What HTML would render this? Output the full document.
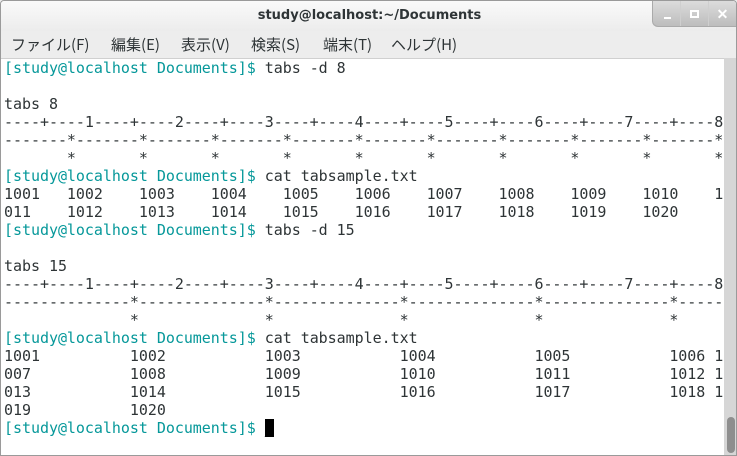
<!DOCTYPE html>
<html><head><meta charset="utf-8"><style>
*{margin:0;padding:0;box-sizing:border-box}
body{width:737px;height:456px;overflow:hidden;background:#ededed;font-family:"Liberation Sans","Noto Sans CJK JP",sans-serif;position:relative}
.win{position:absolute;left:0;top:0;width:737px;height:456px;border:1px solid #9a9a9a;border-radius:4px 4px 0 0;overflow:hidden;background:#ededed}
.title{position:absolute;left:0;top:0;width:737px;height:30px;background:linear-gradient(#fafafa,#ececec);text-align:center;font-weight:bold;font-size:13px;line-height:30px;color:#2e3436;font-family:"DejaVu Sans","Liberation Sans",sans-serif}
.btns{position:absolute;right:0;top:0;width:84px;height:26px;background:linear-gradient(#dcdcdc,#bdbdbd);border-left:1px solid #aaa;border-bottom:1px solid #aaa;border-radius:0 0 0 6px;display:flex}
.btns div{flex:1;border-left:1px solid #cfcfcf;position:relative}
.btns div:first-child{border-left:none}
.menu span{position:absolute;top:33px;font-size:15px;line-height:22px;color:#2e3436;white-space:pre;font-family:"WenQuanYi Zen Hei","Noto Sans CJK JP",sans-serif}
.term{position:absolute;left:0;top:57px;width:723px;height:397px;background:#fff;border-top:1px solid #d0d0d0}
pre{position:absolute;left:3px;top:0;font-family:"DejaVu Sans Mono","Liberation Mono",monospace;font-size:15px;letter-spacing:-0.04px;line-height:18px;color:#2e3436}
.p{color:#06989a}
.cur{background:#000;color:#000}
.sb{position:absolute;left:723px;top:57px;width:14px;height:397px;background:#d6d6d6}
.th{position:absolute;left:726px;top:416px;width:8px;height:36px;background:#8e8e8e;border-radius:4px}
</style></head><body><div class="win">
<div class="title">study@localhost:~/Documents</div>
<div class="btns"><div><span style="position:absolute;left:11px;top:16px;width:7px;height:2px;background:#fff"></span></div><div><span style="position:absolute;left:9px;top:9px;width:9px;height:8px;border:2px solid #fff"></span></div><div style="color:#fff;font-weight:bold;font-size:14px;text-align:center;line-height:26px">✕</div></div>
<div class="menu"><span style="left:10px">ファイル(F)</span><span style="left:110px">編集(E)</span><span style="left:180px">表示(V)</span><span style="left:250px">検索(S)</span><span style="left:322px">端末(T)</span><span style="left:390px">ヘルプ(H)</span></div>
<div class="term"><pre><span class="p">[study@localhost Documents]$</span> tabs -d 8

tabs 8
----+----1----+----2----+----3----+----4----+----5----+----6----+----7----+----8
-------*-------*-------*-------*-------*-------*-------*-------*-------*-------*
       *       *       *       *       *       *       *       *       *       *
<span class="p">[study@localhost Documents]$</span> cat tabsample.txt
1001   1002    1003    1004    1005    1006    1007    1008    1009    1010    1
011    1012    1013    1014    1015    1016    1017    1018    1019    1020
<span class="p">[study@localhost Documents]$</span> tabs -d 15

tabs 15
----+----1----+----2----+----3----+----4----+----5----+----6----+----7----+----8
--------------*--------------*--------------*--------------*--------------*-----
              *              *              *              *              *
<span class="p">[study@localhost Documents]$</span> cat tabsample.txt
1001          1002           1003           1004           1005           1006 1
007           1008           1009           1010           1011           1012 1
013           1014           1015           1016           1017           1018 1
019           1020
<span class="p">[study@localhost Documents]$</span> <span class="cur">_</span></pre></div>
<div class="sb"></div><div class="th"></div>
</div></body></html>
